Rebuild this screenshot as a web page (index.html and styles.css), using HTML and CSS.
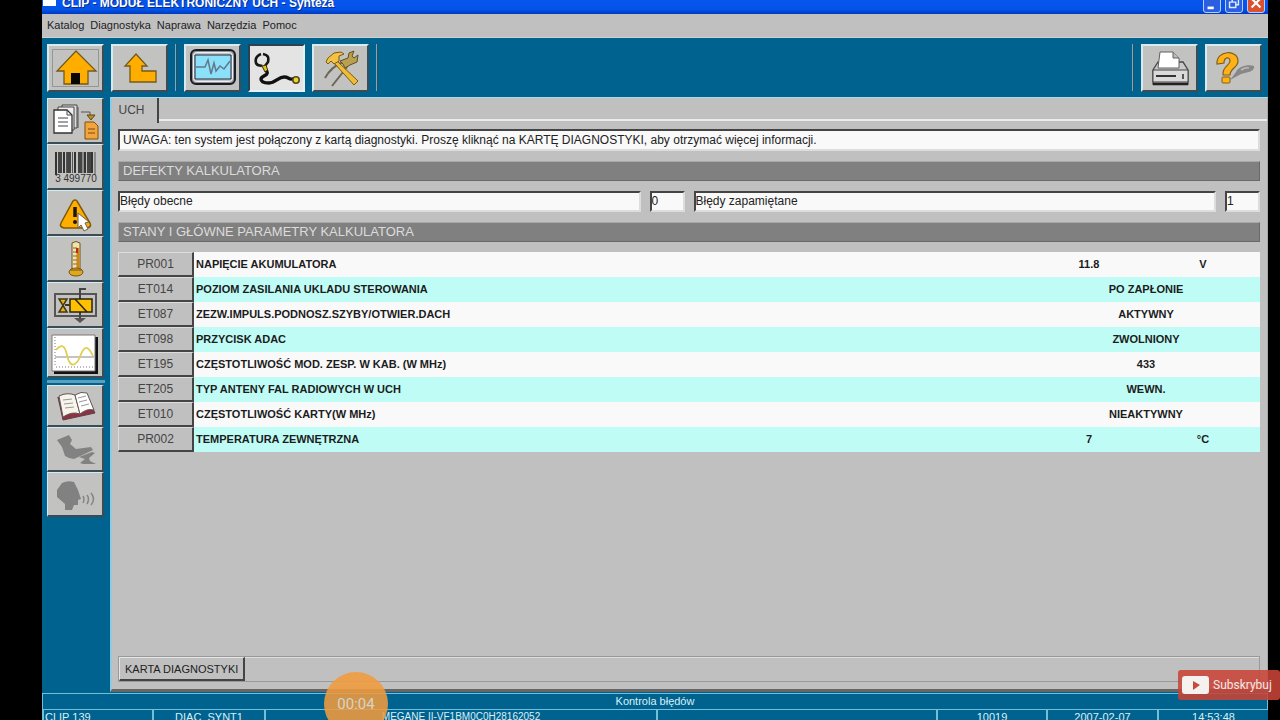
FILE: index.html
```html
<!DOCTYPE html>
<html lang="pl">
<head>
<meta charset="utf-8">
<title>CLIP - Synteza</title>
<link rel="stylesheet" href="styles.css">
</head>
<body>
<div class="app">
  <header class="titlebar">
    <span class="app-mark"></span>
    <h1 class="title">CLIP - MODUŁ ELEKTRONICZNY UCH - Synteza</h1>
    <div class="window-controls">
      <button class="win" aria-label="Minimalizuj"><svg viewBox="0 0 18 20"><path d="M4 14h7v3H4z" fill="#fff"/></svg></button>
      <button class="win" aria-label="Przywróć"><svg viewBox="0 0 18 20"><path d="M7 9V5h7v7h-3M4 9h7v6H4z" fill="none" stroke="#dfe9ff" stroke-width="1.6"/></svg></button>
      <button class="win close" aria-label="Zamknij"><svg viewBox="0 0 18 20"><path d="M4 5l10 10M14 5L4 15" stroke="#fff" stroke-width="2.4"/></svg></button>
    </div>
  </header>
  <nav class="menubar">
    <button>Katalog</button><button>Diagnostyka</button><button>Naprawa</button><button>Narzędzia</button><button>Pomoc</button>
  </nav>
  <div class="toolbar">
    <button class="tool focused" aria-label="Start"><svg viewBox="2 2 53 44"><path d="M29 7L49 27h-8v13H17V27H10z" fill="#ffae00" stroke="#735a1c" stroke-width="1.3"/><path d="M24 29h9v11h-9z" fill="#080600"/></svg></button>
    <button class="tool" aria-label="Poziom wyżej"><svg viewBox="2 2 53 44"><path d="M25 10l11 12h-5v5h14v11H19V22h-5z" fill="#ffae00" stroke="#735a1c" stroke-width="1.3"/></svg></button>
    <span class="divider"></span>
    <button class="tool" aria-label="Testy"><svg viewBox="2 2 53 44"><rect x="7" y="6" width="44" height="34" rx="5" fill="#8d929b" stroke="#1b1d25" stroke-width="2"/><rect x="9.500" y="8.500" width="39" height="29" rx="3" fill="#c3c5cb" stroke="#eef0f3"/><path d="M11 11h36v24H11z" fill="#8be0fa" stroke="#282c34"/><path d="M12 23h9l3-7 3 14 3-11 2 8 4-5 4 3 6-8" fill="none" stroke="#63788a" stroke-width="1.500"/></svg></button>
    <button class="tool pressed" aria-label="Diagnostyka"><svg viewBox="2 2 53 44"><path d="M14 22c-2-1-5 0-6-3-1-4 0-7 5-9M15 10c5 1 6 3 5 8l-3 4" fill="none" stroke="#161616" stroke-width="2.600"/><path d="M14 22l4-1 2 6-3 1z" fill="#e8c01c" stroke="#392f0b"/><path d="M19 28c2 3-6 4-6 7s4 4 8 4c7 0 10-7 16-6 3 0 4 3 8 2" fill="none" stroke="#111" stroke-width="3.400" stroke-linecap="round"/><circle cx="48" cy="36" r="3.200" fill="#e9d33d" stroke="#554a13" stroke-width="1.600"/></svg></button>
    <button class="tool" aria-label="Naprawa"><svg viewBox="2 2 53 44"><path d="M31 18Q19 23 13 34M35 23L20 42" fill="none" stroke="#6c6655" stroke-width="2"/><path d="M31 20l-3-3 8-3 1-5 5-2-2 5 2 2 4-3-1 7-7 3-5 3z" fill="#b9a04e" stroke="#5d4e25"/><path d="M24 16l22 21-4 4-20-22z" fill="#efbd34" stroke="#7b5813"/><path d="M16 14l6-5 7-1 3 2-5 2v5l-5 3-3-3-3 3-2-2z" fill="#f2c244" stroke="#7b5813"/></svg></button>
    <span class="divider"></span>
    <span class="spacer"></span>
    <span class="divider"></span>
    <button class="tool" aria-label="Drukuj"><svg viewBox="2 2 53 44"><path d="M17 18L12 26v14h35V26l-5-8z" fill="#c9c9c9" stroke="#454545" stroke-width="1.300"/><path d="M17 24L19 8h13l6 6v10z" fill="#fff" stroke="#606060"/><path d="M32 8v6h6" fill="#bbb" stroke="#606060"/><path d="M12 26h35v12H12z" fill="#dadada" stroke="#444"/><path d="M15 32h20" stroke="#333" stroke-width="2"/><path d="M42 30v5" stroke="#555" stroke-width="2"/><path d="M12 40h35" stroke="#222" stroke-width="2.400"/></svg></button>
    <button class="tool" aria-label="Pomoc"><svg viewBox="2 2 53 44"><path d="M25 36l6-8c2-6 13-8 18-6 1 5-5 6-13 8z" fill="#878787"/><path d="M36 26q5-3 8-2" fill="none" stroke="#bbb" stroke-width="1.500"/><path d="M12 20c-1-14 21-15 21-3 0 7-8 7-8 14h-7c-1-9 7-9 7-14 0-5-6-4-6 2z" fill="#ffb116" stroke="#805f1d" stroke-width="1.200"/><rect x="17" y="33" width="8" height="6" rx="1" fill="#ffb116" stroke="#805f1d"/></svg></button>
  </div>
  <div class="workspace">
    <aside class="sidebar">
      <div class="group">
        <button class="side" aria-label="Dokumenty"><svg viewBox="1 1 54 43"><path d="M15 7h15v23H15z" fill="#ddd" stroke="#444"/><path d="M11 9h16v23H11z" fill="#eee" stroke="#444"/><path d="M7 12h13l5 5v18H7z" fill="#fff" stroke="#333" stroke-width="1.300"/><path d="M20 12v5h5M11 20h10M11 24h10M11 28h10" fill="none" stroke="#444"/><path d="M31 9v21M34 14h9v5" fill="none" stroke="#555"/><path d="M40 17h8l-4 5z" fill="#c08c20" stroke="#604913"/><path d="M38 24h9l4 4v13H38z" fill="#f2a43d" stroke="#80500c"/><path d="M41 31h7M41 35h7" stroke="#764a11"/></svg></button>
        <button class="side" aria-label="Kod kreskowy"><svg viewBox="1 1 54 43"><path d="M9 8v23M17 8v21M28 8v21M38 8v21M45 8v21" stroke="#333" stroke-width="2"/><path d="M13 8v21M22 8v21M33 8v21M42 8v21" stroke="#444" stroke-width="4"/><path d="M19.500 8v21M25.500 8v21M36 8v21M48 8v23" stroke="#555"/><text x="29" y="38" text-anchor="middle" class="barcode-text">3 499770</text></svg></button>
        <button class="side" aria-label="Defekty"><svg viewBox="1 1 54 43"><path d="M26 11q2-2 4 0l13 22q2 4-3 5H17q-5-1-3-5z" fill="#ffae00" stroke="#7d590a" stroke-width="1.500"/><path d="M28 17v10" stroke="#201700" stroke-width="3.500"/><circle cx="28" cy="32" r="2" fill="#201700"/><path d="M31 23l11 9-4 1 3 6-4 2-3-6-3 3z" fill="#fff" stroke="#6b6255"/></svg></button>
        <button class="side" aria-label="Parametry"><svg viewBox="1 1 54 43"><path d="M25 7q4-3 8 0v28h-8z" fill="#f4e3a8" stroke="#6b5526"/><path d="M31 12v23" stroke="#cb8614" stroke-width="3"/><path d="M26 12h4M26 16h4M26 20h4M26 24h4M26 28h4" stroke="#765"/><path d="M30 12v5" stroke="#bf2820" stroke-width="2"/><ellipse cx="29" cy="36" rx="7" ry="4" fill="#e0a81c" stroke="#765317"/><path d="M23 34h12" stroke="#765317"/></svg></button>
        <button class="side" aria-label="Sterowanie"><svg viewBox="1 1 54 43"><path d="M8 12h41v22H8z" fill="none" stroke="#555" stroke-width="2"/><path d="M39 7h-6v31" fill="none" stroke="#444" stroke-width="2"/><path d="M23 17h22v13H23z" fill="#ffc000" stroke="#292311" stroke-width="1.500"/><path d="M28 17l12 13" stroke="#292311" stroke-width="1.500"/><path d="M12 17h8l-8 13h8z" fill="#e8b218" stroke="#433715" stroke-width="1.500"/><path d="M18 23h5" stroke="#433715" stroke-width="2"/><path d="M27 36h12l-6 5z" fill="#555"/></svg></button>
        <button class="side tall" aria-label="Wykres"><svg viewBox="1 1 54 47"><path d="M7 9h44v37H7z" fill="#111"/><path d="M5 7h43v36H5z" fill="#fff" stroke="#777"/><path d="M8 9v30M9 39h37" stroke="#777" stroke-dasharray="1 2"/><path d="M8 29h39" stroke="#888"/><path d="M9 22c6-7 9-4 11 5 3 14 9 11 13 2 4-12 8-12 13-1" fill="none" stroke="#ddd050" stroke-width="1.800"/></svg></button>
      </div>
      <div class="group second">
        <button class="side" aria-label="Instrukcja"><svg viewBox="1 1 54 39"><path d="M11 12l5 23 32-7-2-4-30 5z" fill="#8d3242" stroke="#60404a"/><path d="M12 11q8-4 16-1l5 19q-8-3-17 3z" fill="#f7f4eb" stroke="#655"/><path d="M28 10q6-4 12-2l7 17q-7-2-14 4z" fill="#fff" stroke="#655"/><path d="M16 15l9-1M17 19l9-1M18 23l9-1M31 13l8-2M32 17l8-2M34 21l8-2" stroke="#999"/></svg></button>
        <button class="side" aria-label="Czujnik" disabled><svg viewBox="1 1 54 42"><path d="M10 13l12-5 3 5-2 4 6 5 15-2 2 3-19 9-5-1-4-2-3-9z" fill="#828282"/><path d="M32 30l13-5 3 1-6 5 1 3 6 3H36l-3-1 5-4z" fill="#828282"/></svg></button>
        <button class="side" aria-label="Głos" disabled><svg viewBox="1 1 54 42"><path d="M15 11q6-3 12-1l4 8 3 9-3 1v5h-4l-2 5h-7v-6l-8-7v-7z" fill="#818181"/><path d="M36 24q2 3 0 7M40 23q3 4 0 9M44 21q5 6 0 12" fill="none" stroke="#858585" stroke-width="1.500"/></svg></button>
      </div>
    </aside>
    <main class="panel">
      <div class="tabs"><button class="tab">UCH</button><span class="tab-line"></span></div>
      <div class="content">
        <input class="field notice" readonly aria-label="Uwaga" value="UWAGA: ten system jest połączony z kartą diagnostyki. Proszę kliknąć na KARTĘ DIAGNOSTYKI, aby otrzymać więcej informacji.">
        <h2 class="section">DEFEKTY KALKULATORA</h2>
        <div class="faults">
          <input class="field" readonly aria-label="Rodzaj błędów obecnych" value="Błędy obecne">
          <input class="field count" readonly aria-label="Liczba błędów obecnych" value="0">
          <input class="field" readonly aria-label="Rodzaj błędów zapamiętanych" value="Błędy zapamiętane">
          <input class="field count" readonly aria-label="Liczba błędów zapamiętanych" value="1">
        </div>
        <h2 class="section">STANY I GŁÓWNE PARAMETRY KALKULATORA</h2>
        <table class="params">
          <colgroup><col class="col-code"><col><col class="col-value"><col class="col-value"></colgroup>
          <tbody>
            <tr><th scope="row"><button class="code">PR001</button></th><td>NAPIĘCIE AKUMULATORA</td><td class="val">11.8</td><td class="val">V</td></tr>
            <tr><th scope="row"><button class="code">ET014</button></th><td>POZIOM ZASILANIA UKLADU STEROWANIA</td><td class="val" colspan="2">PO ZAPŁONIE</td></tr>
            <tr><th scope="row"><button class="code">ET087</button></th><td>ZEZW.IMPULS.PODNOSZ.SZYBY/OTWIER.DACH</td><td class="val" colspan="2">AKTYWNY</td></tr>
            <tr><th scope="row"><button class="code">ET098</button></th><td>PRZYCISK ADAC</td><td class="val" colspan="2">ZWOLNIONY</td></tr>
            <tr><th scope="row"><button class="code">ET195</button></th><td>CZĘSTOTLIWOŚĆ MOD. ZESP. W KAB. (W MHz)</td><td class="val" colspan="2">433</td></tr>
            <tr><th scope="row"><button class="code">ET205</button></th><td>TYP ANTENY FAL RADIOWYCH W UCH</td><td class="val" colspan="2">WEWN.</td></tr>
            <tr><th scope="row"><button class="code">ET010</button></th><td>CZĘSTOTLIWOŚĆ KARTY(W MHz)</td><td class="val" colspan="2">NIEAKTYWNY</td></tr>
            <tr><th scope="row"><button class="code">PR002</button></th><td>TEMPERATURA ZEWNĘTRZNA</td><td class="val">7</td><td class="val">°C</td></tr>
          </tbody>
        </table>
        <div class="actions"><button class="card-button">KARTA DIAGNOSTYKI</button></div>
      </div>
    </main>
  </div>
  <footer class="status">
    <div class="status-main">Kontrola błędów</div>
    <div class="status-cells"><span class="first">CLIP 139</span><span>DIAC_SYNT1</span><span class="vehicle">MEGANE II-VF1BM0C0H28162052</span><span></span><span>10019</span><span>2007-02-07</span><span>14:53:48</span></div>
  </footer>
</div>
<div class="timer">00:04</div>
<button class="subscribe"><svg viewBox="0 0 27 18"><rect width="27" height="18" rx="3" fill="#f5f1ef"/><path d="M11 5l7 4-7 5z" fill="#c9483e"/></svg>Subskrybuj</button>
</body>
</html>
```
FILE: styles.css
```css
* { box-sizing: border-box; }
body {
  margin: 0;
  background: #000;
  color: #222;
  font: 12px/16px "Liberation Sans", Arial, sans-serif;
  overflow: hidden;
}
button, input { font: inherit; color: inherit; margin: 0; padding: 0; border: 0; border-radius: 0; }
button { background: none; }
svg { display: block; }

.app {
  display: flex;
  flex-direction: column;
  height: 100vh;
  margin: 0 12px 0 42px;
  overflow: hidden;
  background: #00628f;
}

.titlebar {
  display: flex;
  align-items: flex-end;
  flex: none;
  height: 14px;
  padding: 0 3px 1px 1px;
  background: linear-gradient(#0755ee, #0353e8 70%, #0039bd);
}
.app-mark { width: 18px; height: 6px; margin: 0 1px 7px 0; background: #fff; border-right: 5px solid #0755ee; }
.title { flex: 1; margin: 0; color: #fff; font-size: 12px; line-height: 20px; text-shadow: 1px 1px #0a2e8c; }
.window-controls { display: flex; gap: 4px; }
.win { width: 18px; height: 20px; border: 1px solid #b9cdf8; border-radius: 3px; background: #2a5fe0; }
.win svg { width: 16px; height: 18px; }
.close { background: #d9512e; }

.menubar { display: flex; flex: none; gap: 6px; height: 24px; padding: 0 5px 2px; background: #c0c0c0; border-bottom: 1px solid #d0d0d0; font-size: 11px; }

.toolbar { display: flex; flex: none; gap: 7px; height: 59px; padding: 6px 6px 6px 5px; }
.tool, .side { width: 57px; background: #c2c2c0; border: 1px solid; border-color: #d6eaf0 #3c4c54 #3c4c54 #d6eaf0; }
.tool { height: 48px; border-width: 2px; }
.tool svg { width: 100%; height: 100%; }
.focused { outline: 1px solid #969696; outline-offset: -6px; }
.pressed { background: #e4e4e4; border-color: #2c4250 #e4f2f6 #e4f2f6 #2c4250; }
.divider { width: 2px; background: #7ba9bd; border-right: 1px solid #2f4d5c; }
.spacer { flex: 1; }

.workspace { display: flex; flex: 1; min-height: 0; }
.sidebar { width: 68px; flex: none; padding: 1px 5px; }
.group { display: flex; flex-direction: column; }
.side { height: 46px; border-bottom-width: 2px; border-right-width: 2px; }
.side svg { width: 54px; height: 43px; }
.tall { height: 50px; }
.tall svg { height: 47px; }
.second { margin-top: 2px; padding-top: 2px; border-top: 3px solid #5aa0bd; }
.second .side { height: 45px; }
.second .side svg { height: 42px; }
.second .side:first-child { height: 42px; }
.second .side:first-child svg { height: 39px; }
.barcode-text { font-size: 10px; fill: #333; }

.panel {
  display: flex;
  flex-direction: column;
  flex: 1;
  min-width: 0;
  background: #c0c0c0;
  border: solid;
  border-width: 1px 1px 3px 2px;
  border-color: #a9dbe8 #aaa #666 #90cbe2;
}
.tabs { display: flex; flex: none; height: 25px; }
.tab { width: 47px; padding: 0 6px 2px 0; border-right: 2px solid #444; color: #444; font-size: 12px; text-align: center; }
.tab-line { flex: 1; margin-bottom: 2px; border-bottom: 2px solid #ececec; }
.content { display: flex; flex-direction: column; flex: 1; padding: 6px 7px 7px 6px; }
.field {
  min-width: 0;
  height: 22px;
  padding: 0 0 1px;
  background: #f9f9f9;
  border: 2px solid;
  border-color: #444 #ddd #ddd #444;
}
.notice { flex: none; padding-left: 3px; }
.section {
  flex: none;
  height: 20px;
  margin: 10px 0;
  padding-left: 4px;
  background: #808080;
  border: 1px solid;
  border-color: #a8a8a8 #696969 #696969 #a8a8a8;
  color: #dcdcdc;
  font-size: 13px;
  font-weight: normal;
  line-height: 18px;
}
.faults { display: grid; grid-template-columns: 1fr 35px 1fr 35px; gap: 9px; }
.faults .field { width: 100%; height: 21px; }

.params { width: 100%; table-layout: fixed; border-collapse: collapse; color: #1c1c1c; font-size: 11px; font-weight: bold; }
.params th, .params td { height: 25px; padding: 0 0 1px; }
.params th { padding: 0; }
.params td { padding-left: 2px; white-space: nowrap; }
.params td.val { padding-left: 0; text-align: center; }
.params tr { background: #f9f9f9; }
.params tr:nth-child(even) { background: #c0fcf6; }
.col-code { width: 76px; }
.col-value { width: 114px; }
.code {
  display: block;
  width: 100%;
  height: 25px;
  background: #c0c0c0;
  border: 1px solid;
  border-color: #ddd #444 #444 #ddd;
  border-right-width: 2px;
  border-bottom-width: 2px;
  color: #444;
  font-size: 12px;
  font-weight: normal;
}
.actions { margin-top: auto; border: 1px solid #999; box-shadow: inset 1px 1px #ddd; }
.card-button { display: block; height: 24px; padding: 0 5px; font-size: 11px; border: solid; border-width: 1px 2px 2px 1px; border-color: #e6e6e6 #444 #444 #e6e6e6; }

.status { flex: none; height: 28px; padding-top: 1px; color: #d8f0f8; font-size: 11px; overflow: hidden; }
.status-main { height: 17px; border: 1px solid #74bfd8; line-height: 15px; text-align: center; }
.status-cells { display: grid; grid-template-columns: 110fr 112fr 392fr 280fr 110fr 111fr 111fr; }
.status-cells span { height: 16px; border-left: 2px solid #74bfd8; line-height: 14px; text-align: center; white-space: nowrap; }
.status-cells .first { padding-left: 1px; text-align: left; }
.status-cells .vehicle { font-size: 10px; }

.timer {
  position: absolute;
  left: 324px;
  top: 672px;
  width: 64px;
  height: 64px;
  border-radius: 50%;
  background: rgba(240, 155, 62, 0.88);
  color: #d4d4cc;
  font: 15px/64px Roboto, sans-serif;
  text-align: center;
}
.subscribe {
  position: absolute;
  right: 0;
  top: 670px;
  display: flex;
  align-items: center;
  gap: 4px;
  width: 102px;
  height: 30px;
  padding-left: 4px;
  border-radius: 3px;
  background: rgba(200, 68, 56, 0.88);
  color: #f4e8e6;
  font: 12px/16px Roboto, sans-serif;
}
.subscribe svg { width: 27px; height: 18px; flex: none; }
```
